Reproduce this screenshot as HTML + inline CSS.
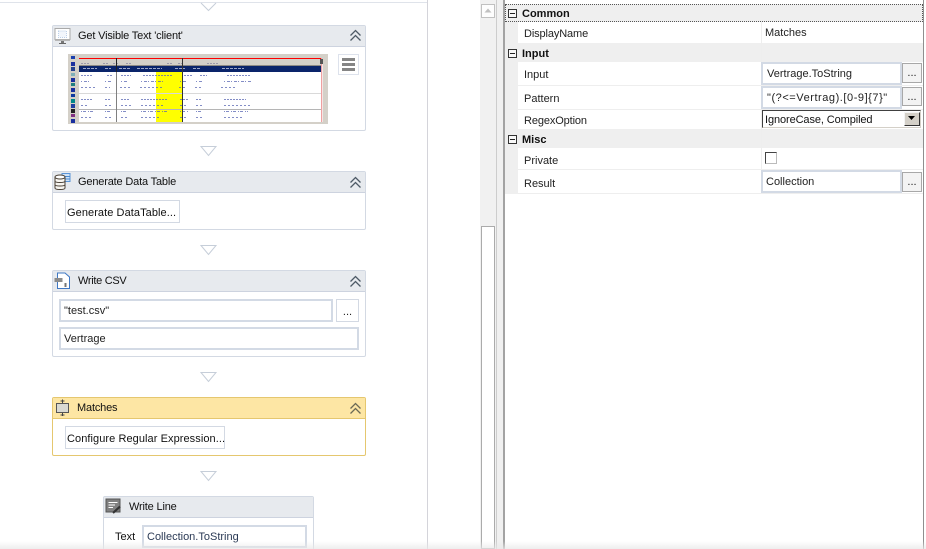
<!DOCTYPE html>
<html><head><meta charset="utf-8">
<style>
html,body{margin:0;padding:0;background:#fff}
#p{position:relative;width:926px;height:549px;overflow:hidden;background:#fff;font:11px/13px "Liberation Sans",sans-serif;color:#1a1a1a}
#p div,#p svg{position:absolute;box-sizing:border-box}
.card{background:#fff;border:1px solid #d3d9e3;border-radius:2px}
.hd{left:0;right:0;top:0;height:21px;background:#e7eaee;border-bottom:1px solid #cdd3df}
.tt{top:4px;left:25px;white-space:nowrap;font-size:11px;color:#111;letter-spacing:-.17px}
.btn{background:#fff;border:1px solid #d3d9e3;padding:6px 1px;white-space:nowrap;color:#111;letter-spacing:.07px}
.in{background:#fff;border:2px solid #d3dae5;padding:4px 3px;white-space:nowrap;color:#222}
.dots{background:#fff;border:1px solid #d3d9e3;text-align:center;color:#222}
.t{white-space:nowrap;color:#222}
.b{font-weight:bold;color:#111}
.g{left:505px;width:418px;background:#efefef}
.pm{left:508px;width:9px;height:9px;border:1px solid #333;background:#f8f8f8}
.pm:after{content:"";position:absolute;left:1px;top:3px;width:5px;height:1px;background:#222}
.sep{left:518px;width:405px;height:1px;background:#eeeeee}
.ddd{left:902px;width:20px;background:#f3f3f3;border:1px solid #a8a8a8;text-align:center;color:#222;font-size:11px;line-height:18px}
</style></head><body><div id="p">

<div style="left:0;top:2px;width:427px;height:1px;background:#dfe3ea"></div>
<div style="left:427px;top:0;width:1px;height:549px;background:#d4d4da"></div>

<div style="left:480px;top:0;width:16px;height:549px;background:#f1f1f1"></div>
<div style="left:481px;top:4px;width:14px;height:14px;background:#fdfdfd;border:1px solid #c0c0c0"></div>
<svg style="left:484px;top:8px" width="8" height="5"><path d="M4 0.5L7.5 4.5H0.5Z" fill="#c0c0c0"/></svg>
<div style="left:481px;top:226px;width:14px;height:323px;background:#fff;border:1px solid #ababab"></div>
<div style="left:496px;top:0;width:1px;height:549px;background:#cdcdcd"></div>
<div style="left:497px;top:0;width:6px;height:549px;background:#f0f0f0"></div>
<div style="left:503px;top:0;width:2px;height:549px;background:#a3a3a3"></div>

<svg style="left:200px;top:0" width="18" height="12"><path d="M1 3L8.5 10.5L16 3" fill="none" stroke="#c6ced9" stroke-width="1"/></svg>

<!-- Card 1 -->
<div class="card" style="left:52px;top:25px;width:314px;height:106px">
  <div class="hd"><div class="tt">Get Visible Text 'client'</div></div>
</div>
<svg style="left:54px;top:27px" width="18" height="18" viewBox="0 0 18 18"><rect x="1" y="1.5" width="15" height="11" fill="#fff" stroke="#a9a9a9"/><rect x="4.5" y="4" width="8" height="6.5" fill="#f2f6fc" stroke="#bcd0e8" stroke-dasharray="1 1"/><rect x="1" y="12.5" width="15" height="1.5" fill="#b8b8b8"/><rect x="7" y="14" width="3" height="2" fill="#777"/><rect x="5" y="16" width="7" height="1" fill="#666"/></svg>
<svg style="left:349px;top:29px" width="13" height="13"><path d="M1.5 6.5L6.5 1.5L11.5 6.5M1.5 11.5L6.5 6.5L11.5 11.5" fill="none" stroke="#4d5a66" stroke-width="1.3"/></svg>

<svg style="left:68px;top:54px" width="260" height="70" viewBox="0 0 260 70">
  <rect width="260" height="70" fill="#d4d0c8"/>
  <rect x="11" y="18" width="243" height="50" fill="#fff"/>
  <rect x="11" y="12" width="243" height="6" fill="#0a246a"/>
  <rect x="88" y="18" width="26" height="50" fill="#ffff00"/>
  <rect x="11" y="4" width="243" height="1" fill="#f00"/>
  <rect x="11" y="11" width="243" height="1" fill="#8d8a84"/>
  <g fill="none" stroke="#5a68b4" stroke-width="1" opacity=".75">
    <path d="M13 9.5h8m14 0h5m5 0h5m8 0h6m35 0h5m6 0h6m23 0h12" stroke="#8c8aa0" stroke-dasharray="2 1"/>
    <path d="M15 14.5h14m8 0h6m8 0h12m6 0h25m13 0h10m8 0h7m22 0h22" stroke="#cfd3e8" stroke-dasharray="3 1"/>
    <path d="M13 21.5h12m14 0h6m8 0h10m12 0h30m11 0h8m8 0h7m20 0h24" stroke-dasharray="2 1"/>
    <path d="M13 27.5h8m16 0h6m10 0h6m14 0h24m15 0h6m10 0h6m22 0h28" stroke-dasharray="1 2 3 1"/>
    <path d="M13 33.5h14m10 0h5m10 0h10m10 0h22m17 0h8m8 0h6m20 0h14" stroke-dasharray="2 2"/>
    <path d="M13 39.5h10m14 0h8m8 0h4m14 0h30m13 0h6m10 0h7m21 0h26" stroke-dasharray="3 1 1 2"/>
    <path d="M13 45.5h12m12 0h6m10 0h8m12 0h26m13 0h8m8 0h6m22 0h22" stroke-dasharray="2 1"/>
    <path d="M13 51.5h8m16 0h6m10 0h10m10 0h24m15 0h6m10 0h6m22 0h26" stroke-dasharray="2 2"/>
    <path d="M13 57.5h12m12 0h5m11 0h6m14 0h28m11 0h8m8 0h7m21 0h24" stroke-dasharray="1 1 3 2"/>
    <path d="M13 63.5h10m14 0h6m10 0h8m12 0h20m19 0h6m10 0h6m22 0h18" stroke-dasharray="2 2"/>
  </g>
  <rect x="11" y="39" width="243" height="1" fill="#d9d9d9"/>
  <rect x="11" y="55" width="243" height="1" fill="#b5b5b5"/>
  <rect x="48" y="4" width="1" height="14" fill="#222"/><rect x="48" y="18" width="1" height="50" fill="#808080"/>
  <rect x="114" y="4" width="1" height="64" fill="#333"/>
  <rect x="253" y="4" width="1" height="64" fill="#f0a0a0"/>
  <rect x="252" y="5" width="3" height="5" fill="#555"/>
  <rect x="254" y="10" width="1" height="58" fill="#f4e4e4"/>
  <g>
    <rect x="3" y="2" width="4" height="3" fill="#1a3fae"/>
    <rect x="3" y="8" width="4" height="4" fill="#1a2f9e"/>
    <rect x="3" y="13" width="4" height="4" fill="#24408e"/>
    <rect x="3" y="19" width="4" height="3" fill="#7fb0b8"/>
    <rect x="3" y="24" width="4" height="4" fill="#1a2f9e"/>
    <rect x="3" y="29" width="4" height="3" fill="#208080"/>
    <rect x="3" y="34" width="4" height="4" fill="#1a2f9e"/>
    <rect x="3" y="40" width="4" height="3" fill="#103a9e"/>
    <rect x="3" y="45" width="4" height="4" fill="#008888"/>
    <rect x="3" y="50" width="4" height="4" fill="#2040a0"/>
    <rect x="3" y="55" width="4" height="4" fill="#222"/>
    <rect x="3" y="60" width="4" height="3" fill="#803080"/>
    <rect x="3" y="65" width="4" height="4" fill="#1a2f9e"/>
  </g>
</svg>

<div style="left:338px;top:54px;width:21px;height:21px;background:#fff;border:1px solid #dde2ec"></div>
<div style="left:342px;top:58px;width:13px;height:3px;background:#858585"></div>
<div style="left:342px;top:63px;width:13px;height:3px;background:#858585"></div>
<div style="left:342px;top:68px;width:13px;height:3px;background:#858585"></div>

<svg style="left:200px;top:145px" width="18" height="12"><path d="M1 1.5H16L8.5 10.5Z" fill="#fff" stroke="#c6ced9"/></svg>

<!-- Card 2 -->
<div class="card" style="left:52px;top:171px;width:314px;height:59px">
  <div class="hd"><div class="tt">Generate Data Table</div></div>
</div>
<svg style="left:54px;top:173px" width="18" height="18" viewBox="0 0 18 18"><rect x="8" y="0.5" width="8" height="8" fill="#cfe2f7" stroke="#5a94d6"/><path d="M8 3.5H16M8 6H16" stroke="#4a8ad0"/><path d="M1 4V15C1 17 11 17 11 15V4M1 8C1 10 11 10 11 8M1 11.5C1 13.5 11 13.5 11 11.5" fill="#f7f5f0" stroke="#4a4035"/><ellipse cx="6" cy="4" rx="5" ry="2" fill="#fff" stroke="#4a4035"/></svg>
<svg style="left:349px;top:176px" width="13" height="13"><path d="M1.5 6.5L6.5 1.5L11.5 6.5M1.5 11.5L6.5 6.5L11.5 11.5" fill="none" stroke="#4d5a66" stroke-width="1.3"/></svg>
<div class="btn" style="left:65px;top:200px;width:115px;height:23px">Generate DataTable...</div>

<svg style="left:200px;top:244px" width="18" height="12"><path d="M1 1.5H16L8.5 10.5Z" fill="#fff" stroke="#c6ced9"/></svg>

<!-- Card 3 -->
<div class="card" style="left:52px;top:270px;width:314px;height:87px">
  <div class="hd"><div class="tt" style="letter-spacing:-.3px">Write CSV</div></div>
</div>
<svg style="left:54px;top:272px" width="18" height="18" viewBox="0 0 18 18"><path d="M3.5 1H11L15.5 5V16.5H3.5Z" fill="#fff" stroke="#3f78c4"/><rect x="0.5" y="6" width="8" height="4" fill="#8c8c8c"/><rect x="10.5" y="11" width="2" height="4" fill="#777"/></svg>
<svg style="left:349px;top:275px" width="13" height="13"><path d="M1.5 6.5L6.5 1.5L11.5 6.5M1.5 11.5L6.5 6.5L11.5 11.5" fill="none" stroke="#4d5a66" stroke-width="1.3"/></svg>
<div class="in" style="left:59px;top:299px;width:274px;height:23px">"test.csv"</div>
<div class="dots" style="left:336px;top:299px;width:23px;height:23px;line-height:24px">...</div>
<div class="in" style="left:59px;top:327px;width:300px;height:23px">Vertrage</div>

<svg style="left:200px;top:371px" width="18" height="12"><path d="M1 1.5H16L8.5 10.5Z" fill="#fff" stroke="#c6ced9"/></svg>

<!-- Card 4 -->
<div class="card" style="left:52px;top:397px;width:314px;height:59px;border-color:#e5c76f">
  <div class="hd" style="background:#fde6a4;border-bottom-color:#e5c76f"><div class="tt" style="left:24px">Matches</div></div>
</div>
<svg style="left:54px;top:399px" width="18" height="18" viewBox="0 0 18 18"><rect x="2.5" y="4.5" width="12" height="9" fill="#d9d9d2" stroke="#555"/><path d="M8.5 .5V4M8.5 14V17M6.5 2H10.5M6.5 16H10.5" stroke="#444"/></svg>
<svg style="left:349px;top:402px" width="13" height="13"><path d="M1.5 6.5L6.5 1.5L11.5 6.5M1.5 11.5L6.5 6.5L11.5 11.5" fill="none" stroke="#6b6a55" stroke-width="1.3"/></svg>
<div class="btn" style="left:65px;top:426px;width:160px;height:23px">Configure Regular Expression...</div>

<svg style="left:200px;top:470px" width="18" height="12"><path d="M1 1.5H16L8.5 10.5Z" fill="#fff" stroke="#c6ced9"/></svg>

<!-- Card 5 -->
<div class="card" style="left:103px;top:496px;width:211px;height:70px">
  <div class="hd"><div class="tt">Write Line</div></div>
</div>
<svg style="left:105px;top:498px" width="18" height="18" viewBox="0 0 18 18"><rect x="1" y="1" width="14" height="13" fill="#808080" stroke="#555"/><path d="M3.5 4.5H12.5M3.5 7H10M3.5 9.5H8" stroke="#fff"/><path d="M8 15L15 8.5" stroke="#333" stroke-width="2.2"/></svg>
<div class="t" style="left:115px;top:531px;color:#111">Text</div>
<div class="in" style="left:142px;top:525px;width:165px;height:23px;color:#2b3a55">Collection.ToString</div>

<!-- Properties -->
<div class="g" style="top:4px;height:18px;border:1px dotted #555;border-left:1px dotted #555"></div>
<div style="left:505px;top:22px;width:13px;height:172px;background:#efefef"></div>
<div class="g" style="top:43px;height:19px"></div>
<div class="g" style="top:129px;height:19px"></div>

<div class="pm" style="left:508px;top:9px"></div><div class="t b" style="left:522px;top:8px">Common</div>
<div class="pm" style="left:508px;top:49px"></div><div class="t b" style="left:522px;top:48px">Input</div>
<div class="pm" style="left:508px;top:135px"></div><div class="t b" style="left:522px;top:134px">Misc</div>

<div class="t" style="left:524px;top:28px;letter-spacing:-.12px">DisplayName</div>
<div class="t" style="left:524px;top:69px">Input</div>
<div class="t" style="left:524px;top:93px">Pattern</div>
<div class="t" style="left:524px;top:115px;letter-spacing:-.12px">RegexOption</div>
<div class="t" style="left:524px;top:155px">Private</div>
<div class="t" style="left:524px;top:178px">Result</div>

<div style="left:761px;top:22px;width:1px;height:172px;background:#eeeeee"></div>
<div class="sep" style="top:85px"></div>
<div class="sep" style="top:109px"></div>
<div class="sep" style="top:169px"></div>
<div class="sep" style="top:193px"></div>
<div style="left:923px;top:0;width:1px;height:549px;background:#8f8f8f"></div>
<div style="left:924px;top:0;width:2px;height:549px;background:#fff"></div>

<div class="t" style="left:765px;top:27px">Matches</div>

<div class="in" style="left:761px;top:62px;width:141px;height:23px;padding:4px 4px">Vertrage.ToString</div>
<div class="ddd" style="top:63px;height:20px">...</div>
<div class="in" style="left:761px;top:86px;width:141px;height:23px;padding:4px 4px;letter-spacing:.55px">"(?&lt;=Vertrag).[0-9]{7}"</div>
<div class="ddd" style="top:87px;height:19px">...</div>

<div style="left:762px;top:110px;width:159px;height:18px;background:#fff;border:1px solid;border-color:#404040 #d4d0c8 #d4d0c8 #404040"></div>
<div class="t" style="left:765px;top:114px;color:#111;letter-spacing:-.1px">IgnoreCase, Compiled</div>
<div style="left:904px;top:112px;width:16px;height:14px;background:#d4d0c8;border:1px solid;border-color:#f4f4f4 #333 #333 #f4f4f4"></div>
<svg style="left:908px;top:116px" width="8" height="5"><path d="M0 0H7L3.5 4Z" fill="#000"/></svg>

<div style="left:765px;top:152px;width:12px;height:12px;background:#fff;border:1px solid;border-color:#444 #bbb #bbb #444"></div>

<div class="in" style="left:761px;top:170px;width:141px;height:23px;padding:4px 3px">Collection</div>
<div class="ddd" style="top:172px;height:20px">...</div>

<!-- bottom fade -->
<div style="left:0;top:541px;width:926px;height:8px;background:linear-gradient(to bottom,rgba(238,238,238,0),rgba(232,232,232,.75))"></div>
</div></body></html>
